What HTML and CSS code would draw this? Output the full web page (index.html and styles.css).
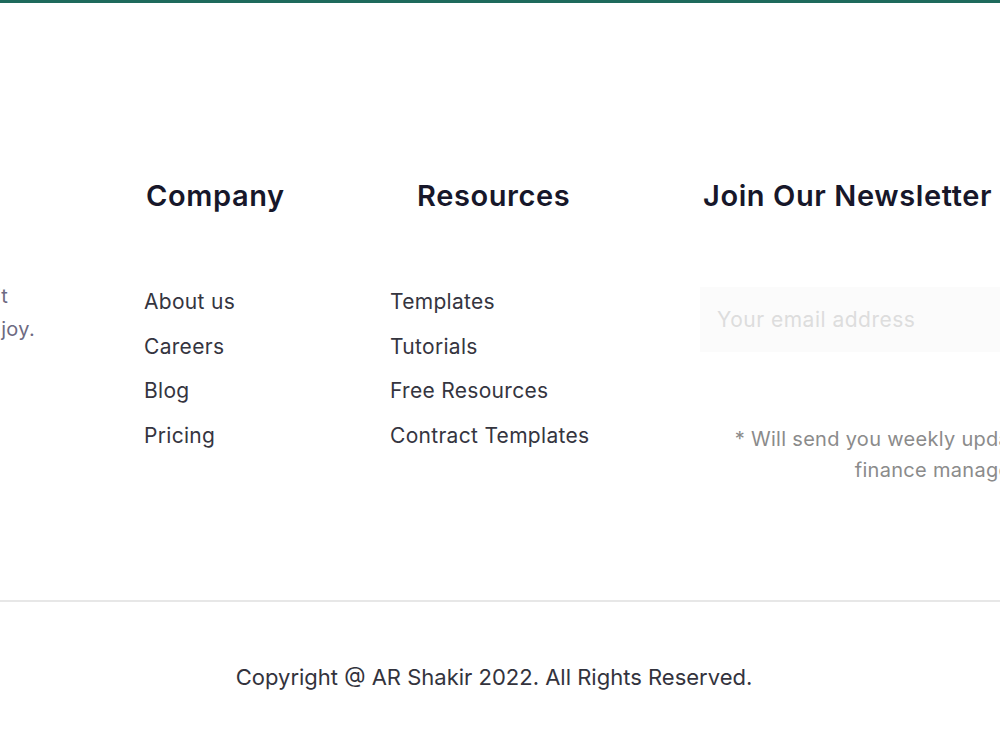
FILE: index.html
```html
<!DOCTYPE html>
<html lang="en">
<head>
<meta charset="utf-8">
<title>Footer</title>
<link rel="stylesheet" href="styles.css">
</head>
<body>
<footer class="footer">
  <div class="footer-main">
    <div class="col col-about">
      <p class="about-text">
        <span class="line line-1">We help you manage your money in a smart way, just sit</span>
        <span class="line line-2">back, relax and let us do the work while you enjoy.</span>
      </p>
    </div>
    <div class="col col-company">
      <h3 class="col-title title-company">Company</h3>
      <ul class="links">
        <li><a href="#">About us</a></li>
        <li><a href="#">Careers</a></li>
        <li><a href="#">Blog</a></li>
        <li><a href="#">Pricing</a></li>
      </ul>
    </div>
    <div class="col col-resources">
      <h3 class="col-title title-resources">Resources</h3>
      <ul class="links">
        <li><a href="#">Templates</a></li>
        <li><a href="#">Tutorials</a></li>
        <li><a href="#">Free Resources</a></li>
        <li><a href="#">Contract Templates</a></li>
      </ul>
    </div>
    <div class="col col-news">
      <h3 class="col-title title-news">Join Our Newsletter</h3>
      <input class="email" type="email" placeholder="Your email address">
      <p class="note">* Will send you weekly updates for your better<br>finance management.</p>
    </div>
  </div>
  <div class="footer-bottom">
    <p class="copyright">Copyright @ AR Shakir 2022. All Rights Reserved.</p>
  </div>
</footer>
</body>
</html>
```
FILE: styles.css
```css
* { box-sizing: border-box; }
html, body {
  margin: 0;
  padding: 0;
  background: #ffffff;
  overflow: hidden;
}
body {
  font-family: Inter, "Noto Sans", "Liberation Sans", sans-serif;
  width: 1000px;
  height: 750px;
}
.footer {
  border-top: 3px solid #1e6a5c;
}
.footer-main {
  display: flex;
  padding-top: 176px;
  padding-bottom: 114px;
  border-bottom: 2px solid #e7e7e7;
}
.col { flex: none; }
.col-about {
  width: 600px;
  margin-left: -565px;
  margin-right: 109px;
  padding-top: 101px;
}
.about-text {
  margin: 0;
  font-size: 20px;
  line-height: 33px;
  letter-spacing: 0.3px;
  color: #6d6a82;
  text-align: right;
}
.line { display: block; white-space: nowrap; }
.line-1 { padding-right: 27px; }
.col-company { width: 246px; }
.col-resources { width: 310px; }
.col-news { width: 520px; }
.col-title {
  margin: 0;
  font-size: 29px;
  line-height: 34px;
  font-weight: 600;
  letter-spacing: 0.6px;
  color: #17172a;
  white-space: nowrap;
}
.title-company { padding-left: 2px; }
.title-resources { padding-left: 27px; }
.title-news { padding-left: 3px; }
.links {
  list-style: none;
  margin: 67px 0 0;
  padding: 0;
}
.links li {
  font-size: 21px;
  line-height: 44.7px;
  letter-spacing: 0.3px;
}
.links a {
  color: #35353f;
  text-decoration: none;
}
.email {
  display: block;
  width: 520px;
  height: 65px;
  margin-top: 74px;
  padding: 0 17px;
  border: none;
  outline: none;
  background: #fbfbfb;
  font-family: inherit;
  font-size: 21px;
  letter-spacing: 0.5px;
  color: #333;
}
.email::placeholder { color: #dddddd; }
.note {
  margin: 72px 0 0;
  font-size: 20px;
  line-height: 31px;
  letter-spacing: 0.3px;
  color: #8b8b8b;
  text-align: center;
}
.footer-bottom {
  padding-top: 60px;
  padding-right: 12px;
  text-align: center;
}
.copyright {
  margin: 0;
  font-size: 22px;
  line-height: 30px;
  color: #33333d;
}
```
